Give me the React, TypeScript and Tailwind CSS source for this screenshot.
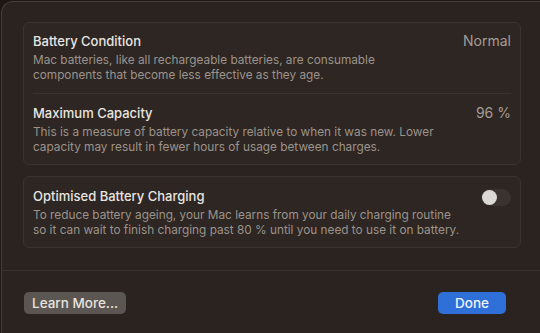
import React, { useState } from 'react';

const Row: React.FC<{ title: string; value?: React.ReactNode; children: React.ReactNode }> = ({ title, value, children }) => (
  <div className="flex items-start justify-between">
    <div className="flex flex-col">
      <div className="text-[13px] leading-[16px] text-[#e9e5e1] font-medium">{title}</div>
      <div className="mt-[4px] text-[11.8px] leading-[15px] text-[#9c938c]">{children}</div>
    </div>
    {value}
  </div>
);

export default function App() {
  const [optimised, setOptimised] = useState(false);

  return (
    <div className="w-[540px] h-[333px] bg-[#1d1815] overflow-hidden" style={{ fontFamily: 'Inter, "Noto Sans", sans-serif' }}>
      <div className="ml-[1px] mt-[1px] h-[340px] rounded-tl-[12px] border-t border-l border-[#473f39] bg-[#2a231f] flex flex-col">
        <div className="pl-[21px] pr-[19px] pt-[20px] pb-[22px] flex flex-col gap-[11px] border-b border-[#3a322d]">
          <div className="rounded-[6px] border border-[#3b332e] bg-[#2d2622] pl-[9px] pr-[9px]">
            <div className="pt-[10px] pb-[10px] border-b border-[#3a322d]">
              <Row title="Battery Condition" value={<span className="text-[14px] leading-[16px] text-[#a59d97]">Normal</span>}>
                Mac batteries, like all rechargeable batteries, are consumable
                <br />
                components that become less effective as they age.
              </Row>
            </div>
            <div className="pt-[11px] pb-[9px]">
              <Row title="Maximum Capacity" value={<span className="text-[14px] leading-[16px] text-[#a59d97]">96 %</span>}>
                This is a measure of battery capacity relative to when it was new. Lower
                <br />
                capacity may result in fewer hours of usage between charges.
              </Row>
            </div>
          </div>
          <div className="rounded-[6px] border border-[#3b332e] bg-[#2d2622] pl-[9px] pr-[9px] pt-[11px] pb-[9px]">
            <Row
              title="Optimised Battery Charging"
              value={
                <button
                  onClick={() => setOptimised(!optimised)}
                  className={`mt-[1px] w-[30px] h-[17px] rounded-full p-[1px] flex ${optimised ? 'bg-[#2f6fd8] justify-end' : 'bg-[#3a332f] justify-start'}`}
                >
                  <span className="w-[15px] h-[15px] rounded-full bg-[#dcd8d5] shadow" />
                </button>
              }
            >
              To reduce battery ageing, your Mac learns from your daily charging routine
              <br />
              so it can wait to finish charging past 80 % until you need to use it on battery.
            </Row>
          </div>
        </div>
        <div className="flex items-center justify-between pl-[22px] pr-[34px] pt-[21px]">
          <button className="h-[22px] px-[8px] rounded-[5px] bg-[#5c5652] text-[13.5px] text-[#e6e2df] font-medium">
            Learn More...
          </button>
          <button className="h-[22px] w-[68px] rounded-[5px] bg-[#2f6fd8] text-[13.5px] text-[#eef3fb] font-medium">
            Done
          </button>
        </div>
      </div>
    </div>
  );
}
